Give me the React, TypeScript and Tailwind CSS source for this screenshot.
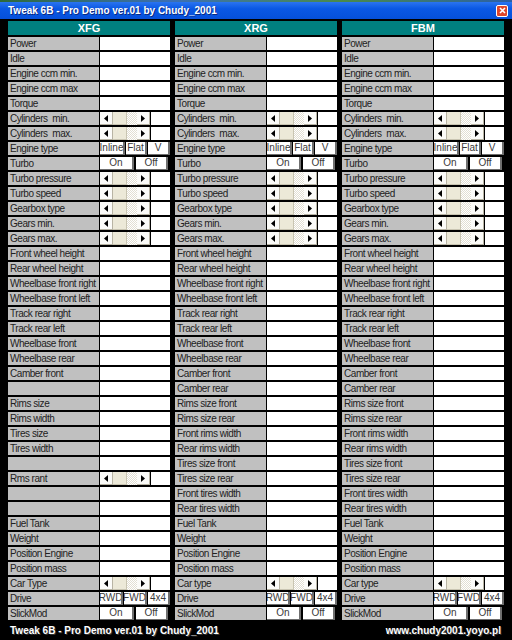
import React from "react";

type Kind = "text" | "scroll" | "engine" | "onoff" | "drive";
type Row = { label: string; kind: Kind };

const FONT = { fontFamily: '"Liberation Sans", Arial, sans-serif' };

const common = (labels: string[], kinds: Record<number, Kind>): Row[] =>
  labels.map((l, i) => ({ label: l, kind: kinds[i] ?? "text" }));

const baseKinds: Record<number, Kind> = {
  5: "scroll",
  6: "scroll",
  7: "engine",
  8: "onoff",
  9: "scroll",
  10: "scroll",
  11: "scroll",
  12: "scroll",
  13: "scroll",
  36: "scroll",
  37: "drive",
  38: "onoff",
};

const top = [
  "Power",
  "Idle",
  "Engine ccm min.",
  "Engine ccm max",
  "Torque",
  "Cylinders  min.",
  "Cylinders  max.",
  "Engine type",
  "Turbo",
  "Turbo pressure",
  "Turbo speed",
  "Gearbox type",
  "Gears min.",
  "Gears max.",
  "Front wheel height",
  "Rear wheel height",
  "Wheelbase front right",
  "Wheelbase front left",
  "Track rear right",
  "Track rear left",
  "Wheelbase front",
  "Wheelbase rear",
  "Camber front",
];

const xfg = common(
  [
    ...top,
    "",
    "Rims size",
    "Rims width",
    "Tires size",
    "Tires width",
    "",
    "Rms rant",
    "",
    "",
    "Fuel Tank",
    "Weight",
    "Position Engine",
    "Position mass",
    "Car Type",
    "Drive",
    "SlickMod",
  ],
  { ...baseKinds, 29: "scroll" }
);

const other = (carType: string) =>
  common(
    [
      ...top,
      "Camber rear",
      "Rims size front",
      "Rims size rear",
      "Front rims width",
      "Rear rims width",
      "Tires size front",
      "Tires size rear",
      "Front tires width",
      "Rear tires width",
      "Fuel Tank",
      "Weight",
      "Position Engine",
      "Position mass",
      carType,
      "Drive",
      "SlickMod",
    ],
    baseKinds
  );

const columns: { title: string; rows: Row[] }[] = [
  { title: "XFG", rows: xfg },
  { title: "XRG", rows: other("Car type") },
  { title: "FBM", rows: other("Car type") },
];

function Arrow({ dir }: { dir: "l" | "r" }) {
  return (
    <svg width="4" height="7" viewBox="0 0 4 7" className="block">
      {dir === "l" ? (
        <polygon points="4,0 4,7 0,3.5" fill="#000" />
      ) : (
        <polygon points="0,0 0,7 4,3.5" fill="#000" />
      )}
    </svg>
  );
}

function Scroll() {
  return (
    <div className="flex h-full gap-[1px]">
      <div className="flex w-[50px] h-full bg-[#f4f3ee]">
        <div className="w-[13px] h-full flex items-center justify-center bg-[#fbfbf8] border-r border-b border-[#b8b4a4]">
          <Arrow dir="l" />
        </div>
        <div className="w-[14px] h-full bg-[#ece9d8] border-r border-b border-[#c9c5b2]" />
        <div className="w-[10px] h-full bg-[repeating-conic-gradient(#ffffff_0_25%,#e2dfd2_0_50%)] bg-[length:2px_2px]" />
        <div className="w-[13px] h-full flex items-center justify-center bg-[#fbfbf8] border-r border-b border-[#b8b4a4]">
          <Arrow dir="r" />
        </div>
      </div>
      <div className="flex-1 bg-white" />
    </div>
  );
}

function Btn({ children, w }: { children: React.ReactNode; w: string }) {
  return (
    <div
      className={`${w} h-full bg-white border-r-2 border-b border-[#6f6f6f] flex items-center justify-center overflow-hidden text-[10px] leading-none text-[#3a3a3a] whitespace-nowrap`}
    >
      {children}
    </div>
  );
}

function Value({ kind }: { kind: Kind }) {
  if (kind === "scroll") return <Scroll />;
  if (kind === "engine")
    return (
      <div className="flex h-full gap-[1px]">
        <Btn w="w-[25px]">Inline</Btn>
        <Btn w="w-[21px]">Flat</Btn>
        <Btn w="w-[22px]">V</Btn>
      </div>
    );
  if (kind === "drive")
    return (
      <div className="flex h-full gap-[1px]">
        <Btn w="w-[23px]">RWD</Btn>
        <Btn w="w-[23px]">FWD</Btn>
        <Btn w="w-[22px]">4x4</Btn>
      </div>
    );
  if (kind === "onoff")
    return (
      <div className="flex h-full gap-[2px] pr-[2px]">
        <Btn w="w-[34px]">On</Btn>
        <Btn w="w-[32px]">Off</Btn>
      </div>
    );
  return <div className="h-full bg-white" />;
}

function Column({ title, rows }: { title: string; rows: Row[] }) {
  return (
    <div className="flex flex-col w-[162px]">
      <div className="h-[14px] bg-[#008080] text-white font-bold text-[11px] leading-[14px] text-center">
        {title}
      </div>
      <div className="flex flex-col gap-[2px] mt-[2px]">
        {rows.map((r, i) => (
          <div key={i} className="flex h-[13px] gap-[1px]">
            <div className="w-[91px] h-full bg-[#c0c0c0] pl-[2px] text-[10px] leading-[13px] tracking-[-0.45px] text-[#222] whitespace-pre overflow-hidden">
              {r.label}
            </div>
            <div className="w-[70px] h-full">
              <Value kind={r.kind} />
            </div>
          </div>
        ))}
      </div>
    </div>
  );
}

export default function App() {
  return (
    <div className="w-[512px] h-[640px] bg-black flex flex-col overflow-hidden" style={FONT}>
      <div className="h-[19px] flex flex-col">
        <div className="h-[2px] bg-[linear-gradient(90deg,#2e6a3a,#3b6fb5,#4a8a4a,#2b5fa8)]" />
        <div className="flex-1 flex items-center justify-between pl-[8px] pr-[4px] bg-[linear-gradient(180deg,#2a74f0_0%,#0a58e4_40%,#0550da_100%)]">
          <span className="text-white font-bold text-[10px] leading-none [text-shadow:1px_1px_0_#0a2a80]">
            Tweak 6B - Pro Demo ver.01 by Chudy_2001
          </span>
          <div className="w-[12px] h-[12px] rounded-[2px] bg-[#e0462a] border border-white flex items-center justify-center">
            <svg width="7" height="7" viewBox="0 0 7 7">
              <path d="M1 1L6 6M6 1L1 6" stroke="#fff" strokeWidth="1.6" />
            </svg>
          </div>
        </div>
      </div>
      <div className="flex gap-[5px] pl-[8px] pt-[2px]">
        {columns.map((c) => (
          <Column key={c.title} title={c.title} rows={c.rows} />
        ))}
      </div>
      <div className="flex justify-between items-center pl-[10px] pr-[11px] mt-[6px] text-white font-bold text-[10px] leading-none [text-shadow:1px_1px_0_#333]">
        <span>Tweak 6B - Pro Demo ver.01 by Chudy_2001</span>
        <span>www.chudy2001.yoyo.pl</span>
      </div>
    </div>
  );
}
